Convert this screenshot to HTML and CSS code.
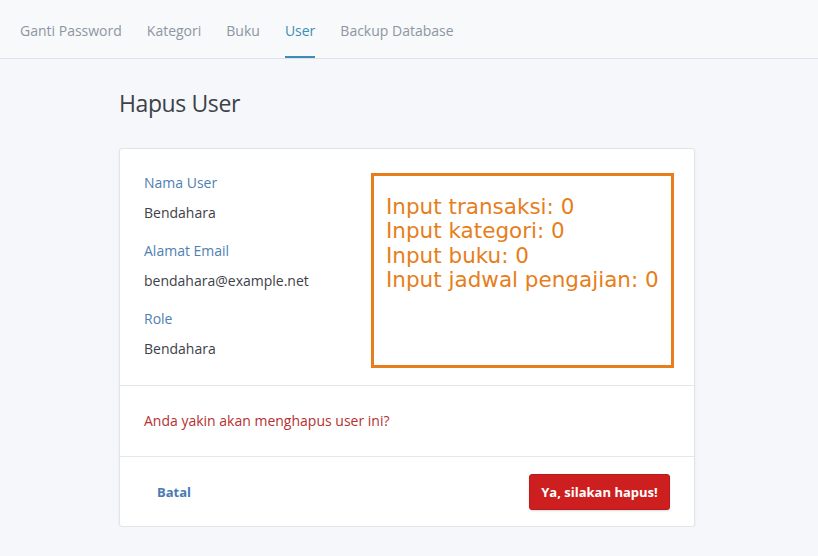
FILE: index.html
```html
<!DOCTYPE html>
<html>
<head>
<meta charset="utf-8">
<link rel="stylesheet" href="styles.css">
</head>
<body>
<nav class="nav">
  <a class="nav-item">Ganti Password</a>
  <a class="nav-item">Kategori</a>
  <a class="nav-item">Buku</a>
  <a class="nav-item active">User</a>
  <a class="nav-item">Backup Database</a>
</nav>
<main class="main">
  <h1 class="title">Hapus User</h1>
  <div class="card">
    <div class="card-body">
      <dl class="info">
        <dt>Nama User</dt>
        <dd>Bendahara</dd>
        <dt>Alamat Email</dt>
        <dd>bendahara@example.net</dd>
        <dt>Role</dt>
        <dd>Bendahara</dd>
      </dl>
      <div class="stats">
        <div>Input transaksi: 0</div>
        <div>Input kategori: 0</div>
        <div>Input buku: 0</div>
        <div>Input jadwal pengajian: 0</div>
      </div>
    </div>
    <div class="card-warning">Anda yakin akan menghapus user ini?</div>
    <div class="card-footer">
      <a class="btn-link">Batal</a>
      <button class="btn-danger">Ya, silakan hapus!</button>
    </div>
  </div>
</main>
</body>
</html>
```

FILE: styles.css
```css
* { box-sizing: border-box; }
html, body { margin: 0; padding: 0; }
body {
  background: #f5f7fa;
  font-family: "Open Sans", "Noto Sans", sans-serif;
  font-size: 14px;
  color: #3d4148;
}
.nav {
  display: flex;
  height: 59px;
  padding-left: 20px;
  gap: 25px;
  border-bottom: 1px solid #dde2e8;
  background: #f7f9fb;
}
.nav-item {
  display: flex;
  align-items: center;
  height: 58px;
  padding-top: 5px;
  color: #8d96a1;
  font-size: 14px;
  border-bottom: 2px solid transparent;
}
.nav-item.active {
  color: #3d8db5;
  border-bottom-color: #3d8db5;
}
.main {
  width: 576px;
  margin-left: 119px;
}
.title {
  margin: 30px 0 0;
  height: 59px;
  font-size: 23px;
  font-weight: 400;
  line-height: 28px;
  color: #3d4148;
  letter-spacing: -0.4px;
}
.card {
  background: #fff;
  border: 1px solid #e1e5ea;
  border-radius: 3px;
  box-shadow: 0 1px 3px rgba(0,0,0,0.06);
}
.card-body {
  display: flex;
  justify-content: space-between;
  align-items: flex-start;
  padding: 24px 20px 17px 24px;
  border-bottom: 1px solid #e4e7eb;
}
.info { margin: 0; }
.info dt {
  color: #4f80b0;
  line-height: 20px;
  margin: 0 0 10px;
}
.info dd {
  margin: 0 0 18px;
  line-height: 20px;
  color: #3d4148;
}
.info dd:last-child { margin-bottom: 0; }
.stats {
  width: 303px;
  height: 195px;
  border: 3px solid #e67e1b;
  padding: 19px 12px 0 12px;
  font-family: "DejaVu Sans", sans-serif;
  font-size: 21.5px;
  line-height: 24.4px;
  color: #e67e1b;
  white-space: nowrap;
}
.card-warning {
  padding: 25px 24px;
  line-height: 20px;
  color: #b53030;
  border-bottom: 1px solid #e4e7eb;
}
.card-footer {
  display: flex;
  justify-content: space-between;
  align-items: center;
  padding: 17px 24px 16px 24px;
}
.btn-link {
  padding-left: 13px;
  color: #4a7bb0;
  font-weight: 700;
  font-size: 13px;
}
.btn-danger {
  height: 36px;
  width: 141px;
  background: #cd1f1f;
  color: #fff;
  border: 1px solid #b81b1b;
  border-radius: 3px;
  font-family: "Open Sans", "Noto Sans", sans-serif;
  font-weight: 700;
  font-size: 13px;
  box-shadow: 0 1px 2px rgba(0,0,0,0.15);
}
```
